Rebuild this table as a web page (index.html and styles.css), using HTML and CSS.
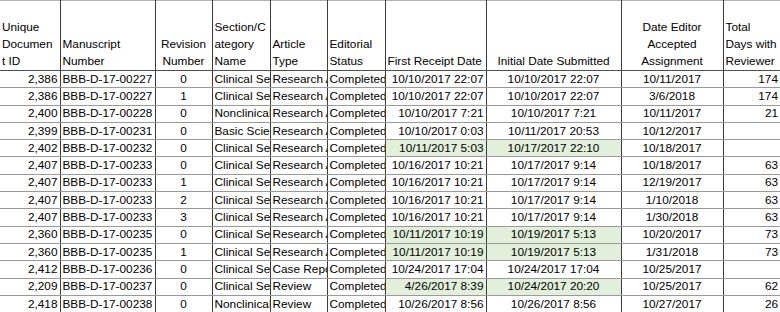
FILE: index.html
```html
<!DOCTYPE html>
<html lang="en">
<head>
    <meta charset="UTF-8">
    <meta name="viewport" content="width=device-width, initial-scale=1.0">
    <title>Manuscript Report</title>
    <link rel="stylesheet" href="styles.css">
</head>
<body>
    <table class="sheet">
        <colgroup>
            <col class="w-id">
            <col class="w-ms">
            <col class="w-rev">
            <col class="w-sec">
            <col class="w-art">
            <col class="w-stat">
            <col class="w-first">
            <col class="w-init">
            <col class="w-acc">
            <col class="w-days">
        </colgroup>
        <thead>
            <tr class="head">
                <th class="left">Unique<br>Documen<br>t ID</th>
                <th class="left">Manuscript<br>Number</th>
                <th class="center">Revision<br>Number</th>
                <th class="left">Section/C<br>ategory<br>Name</th>
                <th class="left">Article<br>Type</th>
                <th class="left">Editorial<br>Status</th>
                <th class="left">First Receipt Date</th>
                <th class="center">Initial Date Submitted</th>
                <th class="center">Date Editor<br>Accepted<br>Assignment</th>
                <th class="left last">Total<br>Days with<br>Reviewer</th>
            </tr>
        </thead>
        <tbody>
            <tr>
                <td class="right">2,386</td><td>BBB-D-17-00227</td><td class="center">0</td><td>Clinical Section</td><td>Research Article</td><td>Completed</td>
                <td class="right">10/10/2017 22:07</td><td class="center">10/10/2017 22:07</td><td class="center">10/11/2017</td><td class="right last">174</td>
            </tr>
            <tr>
                <td class="right">2,386</td><td>BBB-D-17-00227</td><td class="center">1</td><td>Clinical Section</td><td>Research Article</td><td>Completed</td>
                <td class="right">10/10/2017 22:07</td><td class="center">10/10/2017 22:07</td><td class="center">3/6/2018</td><td class="right last">174</td>
            </tr>
            <tr>
                <td class="right">2,400</td><td>BBB-D-17-00228</td><td class="center">0</td><td>Nonclinical Section</td><td>Research Article</td><td>Completed</td>
                <td class="right">10/10/2017 7:21</td><td class="center">10/10/2017 7:21</td><td class="center">10/11/2017</td><td class="right last">21</td>
            </tr>
            <tr>
                <td class="right">2,399</td><td>BBB-D-17-00231</td><td class="center">0</td><td>Basic Science</td><td>Research Article</td><td>Completed</td>
                <td class="right">10/10/2017 0:03</td><td class="center">10/11/2017 20:53</td><td class="center">10/12/2017</td><td class="right last"></td>
            </tr>
            <tr>
                <td class="right">2,402</td><td>BBB-D-17-00232</td><td class="center">0</td><td>Clinical Section</td><td>Research Article</td><td>Completed</td>
                <td class="right hl">10/11/2017 5:03</td><td class="center hl">10/17/2017 22:10</td><td class="center">10/18/2017</td><td class="right last"></td>
            </tr>
            <tr>
                <td class="right">2,407</td><td>BBB-D-17-00233</td><td class="center">0</td><td>Clinical Section</td><td>Research Article</td><td>Completed</td>
                <td class="right">10/16/2017 10:21</td><td class="center">10/17/2017 9:14</td><td class="center">10/18/2017</td><td class="right last">63</td>
            </tr>
            <tr>
                <td class="right">2,407</td><td>BBB-D-17-00233</td><td class="center">1</td><td>Clinical Section</td><td>Research Article</td><td>Completed</td>
                <td class="right">10/16/2017 10:21</td><td class="center">10/17/2017 9:14</td><td class="center">12/19/2017</td><td class="right last">63</td>
            </tr>
            <tr>
                <td class="right">2,407</td><td>BBB-D-17-00233</td><td class="center">2</td><td>Clinical Section</td><td>Research Article</td><td>Completed</td>
                <td class="right">10/16/2017 10:21</td><td class="center">10/17/2017 9:14</td><td class="center">1/10/2018</td><td class="right last">63</td>
            </tr>
            <tr>
                <td class="right">2,407</td><td>BBB-D-17-00233</td><td class="center">3</td><td>Clinical Section</td><td>Research Article</td><td>Completed</td>
                <td class="right">10/16/2017 10:21</td><td class="center">10/17/2017 9:14</td><td class="center">1/30/2018</td><td class="right last">63</td>
            </tr>
            <tr>
                <td class="right">2,360</td><td>BBB-D-17-00235</td><td class="center">0</td><td>Clinical Section</td><td>Research Article</td><td>Completed</td>
                <td class="right hl">10/11/2017 10:19</td><td class="center hl">10/19/2017 5:13</td><td class="center">10/20/2017</td><td class="right last">73</td>
            </tr>
            <tr>
                <td class="right">2,360</td><td>BBB-D-17-00235</td><td class="center">1</td><td>Clinical Section</td><td>Research Article</td><td>Completed</td>
                <td class="right hl">10/11/2017 10:19</td><td class="center hl">10/19/2017 5:13</td><td class="center">1/31/2018</td><td class="right last">73</td>
            </tr>
            <tr>
                <td class="right">2,412</td><td>BBB-D-17-00236</td><td class="center">0</td><td>Clinical Section</td><td>Case Report</td><td>Completed</td>
                <td class="right">10/24/2017 17:04</td><td class="center">10/24/2017 17:04</td><td class="center">10/25/2017</td><td class="right last"></td>
            </tr>
            <tr>
                <td class="right">2,209</td><td>BBB-D-17-00237</td><td class="center">0</td><td>Clinical Section</td><td>Review</td><td>Completed</td>
                <td class="right hl">4/26/2017 8:39</td><td class="center hl">10/24/2017 20:20</td><td class="center">10/25/2017</td><td class="right last">62</td>
            </tr>
            <tr>
                <td class="right">2,418</td><td>BBB-D-17-00238</td><td class="center">0</td><td>Nonclinical Section</td><td>Review</td><td>Completed</td>
                <td class="right">10/26/2017 8:56</td><td class="center">10/26/2017 8:56</td><td class="center">10/27/2017</td><td class="right last">26</td>
            </tr>
        </tbody>
    </table>
</body>
</html>
```

FILE: styles.css
```css
body {
    margin: 0;
    background: #ffffff;
    overflow: hidden;
    font-family: "Liberation Sans", Arial, sans-serif;
    font-size: 11.8px;
    color: #000000;
}

.sheet {
    border-collapse: collapse;
    table-layout: fixed;
    width: 780px;
}

/* column widths follow the spreadsheet grid */
.w-id { width: 60px; }
.w-ms { width: 95px; }
.w-rev { width: 57px; }
.w-sec { width: 58px; }
.w-art { width: 57px; }
.w-stat { width: 58px; }
.w-first { width: 101px; }
.w-init { width: 135px; }
.w-acc { width: 102px; }
.w-days { width: 57px; }

.sheet th,
.sheet td {
    border-right: 1px solid #3c3c3c;
    border-bottom: 1px solid #9a9a9a;
    padding: 0 2px 0 2px;
    white-space: nowrap;
    overflow: hidden;
    text-overflow: clip;
    text-align: left;
}

.sheet th {
    font-weight: normal;
    vertical-align: bottom;
    line-height: 17px;
    padding-bottom: 0;
    border-top: 1px solid #b0b0b0;
    border-bottom-color: #505050;
}

.head {
    height: 70px;
}

.sheet tbody tr {
    height: 17.3px;
}

.sheet td {
    line-height: 15px;
}

.sheet .last {
    border-right: none;
}

.left { text-align: left; }
.sheet .center { text-align: center; }
.sheet .right { text-align: right; }

.sheet .hl {
    background: #e2efda;
}
```
